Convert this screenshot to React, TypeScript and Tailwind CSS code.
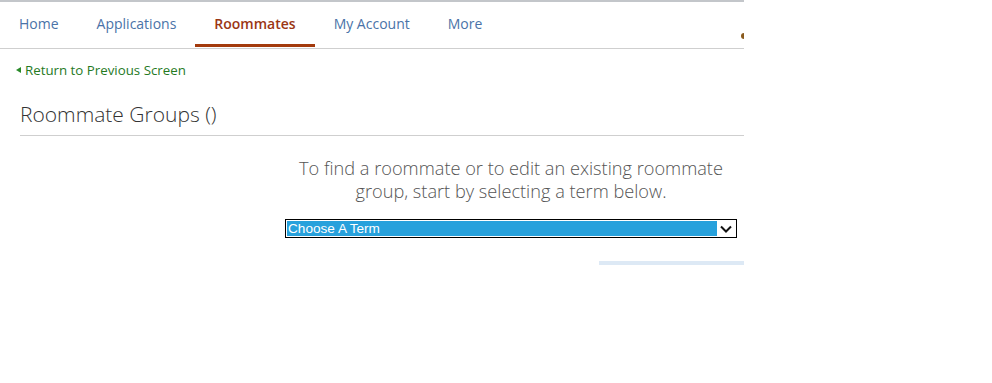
const tabs = [
  { name: 'Home', active: false },
  { name: 'Applications', active: false },
  { name: 'Roommates', active: true },
  { name: 'My Account', active: false },
  { name: 'More', active: false },
]

export default function App() {
  return (
    <div className="w-[992px] h-[383px] bg-white overflow-hidden" style={{ fontFamily: '"Open Sans", sans-serif' }}>
      <div className="w-[744px] overflow-hidden">
        {/* Top nav */}
        <div className="border-t-2 border-[#c3c6ca] border-b border-b-[#cfcfcf] h-[49px] relative">
          <div className="flex h-full">
            {tabs.map((t) => (
              <div
                key={t.name}
                className={
                  t.active
                    ? 'pt-[12px] px-[19px] text-[14px] leading-[20px] font-semibold text-[#9b3614] border-b-[3px] border-[#a33a0c] h-[45px]'
                    : 'pt-[12px] px-[19px] text-[14px] leading-[20px] text-[#4a73a8]'
                }
              >
                {t.name}
              </div>
            ))}
          </div>
          <div className="absolute right-0 top-[31px] w-[3px] h-[6px] rounded-l-full bg-[#8a5a1c]" />
        </div>

        {/* Return link */}
        <div className="pl-[16px] pt-[12px] flex items-center gap-[4px] text-[13.3px] leading-[18px] text-[#267a1f]">
          <span className="w-0 h-0 border-y-[3.5px] border-y-transparent border-r-[5px] border-r-[#2a8a2a]" />
          <span>Return to Previous Screen</span>
        </div>

        {/* Heading */}
        <div className="ml-[20px] mt-[21px] border-b border-[#cfcfcf] pb-[7px]">
          <h1 className="text-[21px] leading-[28px] font-light text-[#333]">Roommate Groups ()</h1>
        </div>

        {/* Body */}
        <div className="flex">
          <div className="w-[285px] shrink-0" />
          <div className="w-[452px] flex flex-col">
            <p className="mt-[21px] text-[18.2px] leading-[23px] font-light text-[#555] text-center">
              To find a roommate or to edit an existing roommate group, start by selecting a term below.
            </p>
            <div className="mt-[16px] h-[19px] border border-black flex items-center p-[1px]" style={{ fontFamily: '"Liberation Sans", Arial, sans-serif' }}>
              <div className="flex-1 h-full bg-[#27a1dc] text-white text-[13.6px] leading-[15px] pl-[1px]">Choose A Term</div>
              <div className="w-[18px] flex items-center justify-center">
                <svg width="12" height="8" viewBox="0 0 12 8">
                  <path d="M1 1.5l5 5 5-5" fill="none" stroke="#111" strokeWidth="2" />
                </svg>
              </div>
            </div>
          </div>
        </div>
        <div className="flex justify-end mt-[23px]">
          <div className="w-[145px] h-[4px] bg-[#dde9f5]" />
        </div>
      </div>
    </div>
  )
}
